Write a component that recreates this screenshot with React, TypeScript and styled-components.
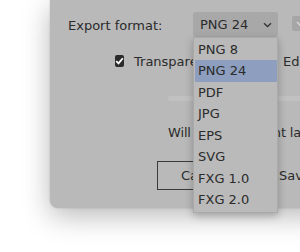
import React from "react";
import styled, { createGlobalStyle } from "styled-components";

const Global = createGlobalStyle`
  html, body { margin: 0; padding: 0; background: #ffffff; overflow: hidden; }
  body { width: 300px; height: 252px; font-family: "DejaVu Sans", "Liberation Sans", sans-serif; }
`;

const Stage = styled.div`
  width: 300px;
  height: 252px;
  overflow: hidden;
  padding-left: 50px;
  box-sizing: border-box;
`;

const Dialog = styled.div`
  position: relative;
  width: 290px;
  height: 208px;
  background: #b9b9b9;
  border-radius: 0 0 0 8px;
  box-shadow: 0 8px 28px rgba(0, 0, 0, 0.28), 0 0 2px rgba(0, 0, 0, 0.2);
  color: #2b2b2b;
  font-size: 13px;
  display: flex;
  flex-direction: column;
`;

const FormatRow = styled.div`
  display: flex;
  align-items: center;
  margin-top: 12px;
  padding-left: 18px;
  height: 25px;
`;

const Label = styled.span`
  width: 125px;
  padding-top: 1px;
`;

const Select = styled.div`
  width: 85px;
  height: 25px;
  box-sizing: border-box;
  background: #a8a8a8;
  border-radius: 3px;
  display: flex;
  align-items: center;
  justify-content: space-between;
  padding: 0 6px 0 7px;
`;

const SmallButton = styled.div`
  margin-left: 14px;
  width: 16px;
  height: 15px;
  background: #a6a6a6;
  border-radius: 2px;
  display: flex;
  align-items: center;
  justify-content: center;
  margin-top: -2px;
`;

const CheckRow = styled.div`
  display: flex;
  align-items: center;
  gap: 10px;
  margin-top: 14px;
  padding-left: 65px;
  height: 20px;
  white-space: nowrap;
`;

const Box = styled.span`
  width: 12px;
  height: 12px;
  border-radius: 2px;
  background: #2a2a2a;
  display: flex;
  align-items: center;
  justify-content: center;
`;

const Track = styled.div`
  margin-top: 25px;
  margin-left: 118px;
  height: 5px;
  border-radius: 3px;
  background: #c1c1c1;
`;

const Info = styled.div`
  margin-top: 25px;
  padding-left: 118px;
  white-space: nowrap;
  height: 14px;
  line-height: 14px;
  letter-spacing: -0.15px;
`;

const Buttons = styled.div`
  display: flex;
  gap: 8px;
  margin-top: 21px;
  padding-left: 107px;
`;

const Button = styled.div<{ $plain?: boolean }>`
  flex: none;
  width: ${(p) => (p.$plain ? "76px" : "92px")};
  height: 29px;
  box-sizing: border-box;
  border: 1px solid ${(p) => (p.$plain ? "transparent" : "#3a3a3a")};
  display: flex;
  align-items: center;
  justify-content: center;
`;

const Menu = styled.div`
  position: absolute;
  left: 143px;
  top: 37px;
  width: 85px;
  box-sizing: border-box;
  background: #bababa;
  border: 1px solid #a9a9a9;
  padding: 0.5px 0 1px 1px;
  box-shadow: 0 3px 8px rgba(0, 0, 0, 0.25);
  display: flex;
  flex-direction: column;
`;

const Item = styled.div<{ $active?: boolean }>`
  height: 21.5px;
  line-height: 21.5px;
  padding-left: 3px;
  background: ${(p) => (p.$active ? "#8d9ebe" : "transparent")};
  color: #2b2b2b;
`;

const formats = ["PNG 8", "PNG 24", "PDF", "JPG", "EPS", "SVG", "FXG 1.0", "FXG 2.0"];

export default function App() {
  return (
    <Stage>
      <Global />
      <Dialog>
        <FormatRow>
          <Label>Export format:</Label>
          <Select>
            <span>PNG 24</span>
            <svg width="9" height="6" viewBox="0 0 9 6">
              <path d="M1 1.2 L4.5 4.5 L8 1.2" fill="none" stroke="#333" strokeWidth="1.3" />
            </svg>
          </Select>
          <SmallButton>
            <svg width="8" height="5" viewBox="0 0 8 5">
              <path d="M1 1 L4 4 L7 1" fill="none" stroke="#d8d8d8" strokeWidth="1.4" />
            </svg>
          </SmallButton>
        </FormatRow>
        <CheckRow>
          <Box>
            <svg width="9" height="8" viewBox="0 0 9 8">
              <path d="M1.2 4.2 L3.5 6.4 L7.8 1.2" fill="none" stroke="#fff" strokeWidth="1.8" />
            </svg>
          </Box>
          <span>Transparent Canvas in Edge Animate</span>
        </CheckRow>
        <Track />
        <Info>Will export current layers</Info>
        <Buttons>
          <Button>Cancel</Button>
          <Button $plain>Save</Button>
        </Buttons>
        <Menu>
          {formats.map((f) => (
            <Item key={f} $active={f === "PNG 24"}>
              {f}
            </Item>
          ))}
        </Menu>
      </Dialog>
    </Stage>
  );
}
